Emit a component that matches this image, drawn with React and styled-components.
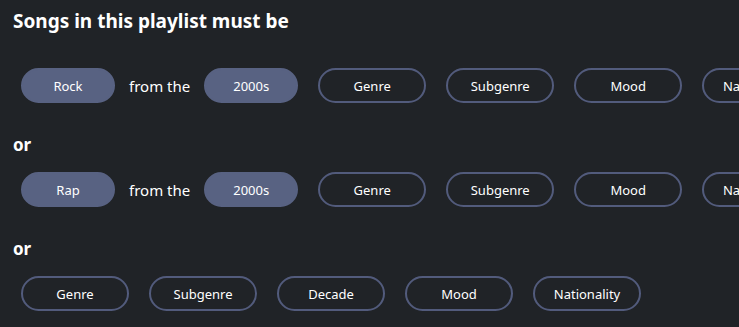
import React from "react";
import styled, { createGlobalStyle } from "styled-components";

const Global = createGlobalStyle`
  html, body { margin: 0; padding: 0; background: #202327; }
  body { font-family: "Noto Sans", "Open Sans", sans-serif; color: #ffffff; }
`;

const Page = styled.div`
  width: 739px;
  height: 327px;
  overflow: hidden;
  padding: 7px 0 0 13px;
  box-sizing: border-box;
  background: #202327;
`;

const Title = styled.h2`
  margin: 0;
  font-size: 19px;
  font-weight: 700;
  line-height: 28px;
`;

const OrLabel = styled.div`
  margin-top: 30px;
  font-size: 17px;
  font-weight: 700;
  line-height: 24px;
`;

const Row = styled.div`
  display: flex;
  align-items: center;
  gap: 20px;
  margin-top: ${(p) => p.$top}px;
  padding-left: 8px;
  white-space: nowrap;
`;

const Pill = styled.button`
  flex: none;
  box-sizing: border-box;
  height: 35px;
  width: ${(p) => (p.$filled ? 94 : 108)}px;
  border-radius: 18px;
  border: 2px solid ${(p) => (p.$filled ? "#586282" : "#525b7c")};
  background: ${(p) => (p.$filled ? "#586282" : "transparent")};
  color: #ffffff;
  font-family: "Noto Sans", "Open Sans", sans-serif;
  font-size: 13px;
  padding: 0;
  cursor: pointer;
`;

const Connector = styled.span`
  margin: 0 -6px;
  font-size: 15px;
`;

const options = ["Genre", "Subgenre", "Mood", "Nationality"];

function RuleRow({ genre, decade, top }) {
  return (
    <Row $top={top}>
      <Pill $filled>{genre}</Pill>
      <Connector>from the</Connector>
      <Pill $filled>{decade}</Pill>
      {options.map((o) => (
        <Pill key={o}>{o}</Pill>
      ))}
    </Row>
  );
}

export default function App() {
  return (
    <>
      <Global />
      <Page>
        <Title>Songs in this playlist must be</Title>
        <RuleRow genre="Rock" decade="2000s" top={33} />
        <OrLabel>or</OrLabel>
        <RuleRow genre="Rap" decade="2000s" top={15} />
        <OrLabel>or</OrLabel>
        <Row $top={15}>
          {["Genre", "Subgenre", "Decade", "Mood", "Nationality"].map((o) => (
            <Pill key={o}>{o}</Pill>
          ))}
        </Row>
      </Page>
    </>
  );
}
